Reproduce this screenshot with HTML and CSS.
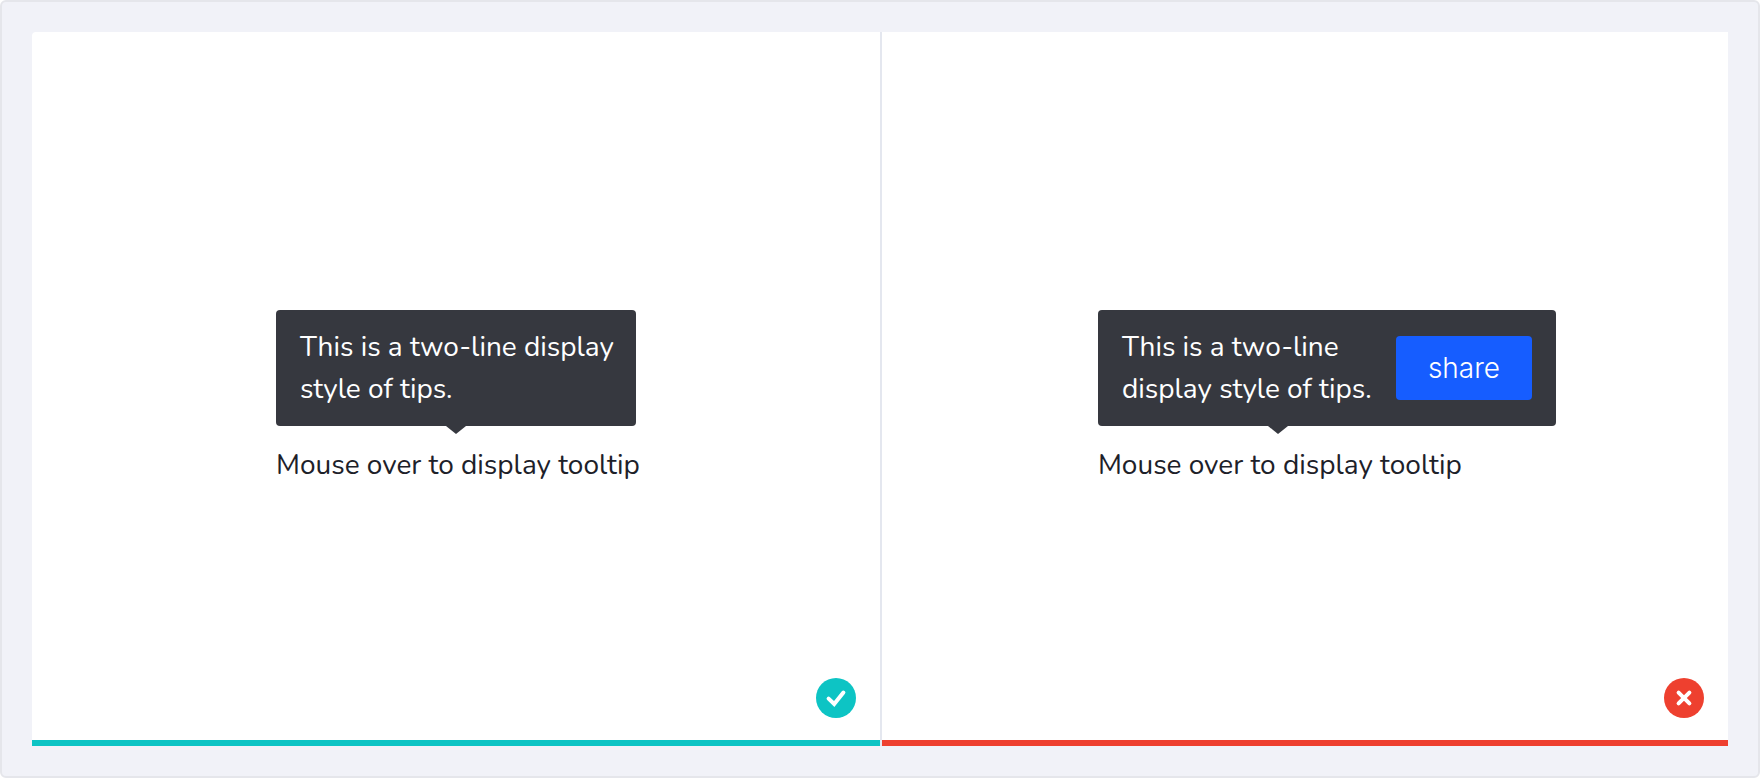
FILE: index.html
```
<!DOCTYPE html>
<html lang="en">

<head>
    <meta charset="UTF-8" />
    <meta name="viewport" content="width=device-width, initial-scale=1.0" />
    <title>Tooltip usage</title>
    <link rel="stylesheet" href="styles.css">
</head>

<body>
    <main class="board">
        <section class="panel panel-do">
            <div class="stage">
                <div class="demo">
                    <div class="tooltip" role="tooltip" id="tip-do">
                        <p class="tooltip-text">This is a two-line display<br>style of tips.</p>
                    </div>
                    <span class="trigger" aria-describedby="tip-do">Mouse over to display tooltip</span>
                </div>
            </div>
            <div class="status">
                <svg class="status-icon" viewBox="0 0 40 40" role="img" aria-label="Do">
                    <circle cx="20" cy="20" r="20" />
                    <path d="M12.6 20.6 18.2 26 27.4 14.6" />
                </svg>
            </div>
            <div class="bar"></div>
        </section>

        <section class="panel panel-dont">
            <div class="stage">
                <div class="demo">
                    <div class="tooltip" role="tooltip" id="tip-dont">
                        <p class="tooltip-text">This is a two-line<br>display style of tips.</p>
                        <button type="button" class="share-btn">share</button>
                    </div>
                    <span class="trigger" aria-describedby="tip-dont">Mouse over to display tooltip</span>
                </div>
            </div>
            <div class="status">
                <svg class="status-icon" viewBox="0 0 40 40" role="img" aria-label="Don't">
                    <circle cx="20" cy="20" r="20" />
                    <path d="M14.6 14.6 25.4 25.4M25.4 14.6 14.6 25.4" />
                </svg>
            </div>
            <div class="bar"></div>
        </section>
    </main>
</body>

</html>
```
FILE: styles.css
```
* {
    box-sizing: border-box;
}

body {
    margin: 0;
    font-family: "Nunito", "Lato", sans-serif;
    font-size: 28px;
    line-height: 42px;
    color: #1d2129;
    background-color: #ffffff;
}

.board {
    display: grid;
    grid-template-columns: 1fr 1fr;
    min-height: 100vh;
    padding: 30px;
    border: 2px solid #e5e6eb;
    border-radius: 6px;
    background-color: #f1f2f8;
}

.panel {
    display: flex;
    flex-direction: column;
    background-color: #ffffff;
}

.panel-do {
    border-top-left-radius: 4px;
}

.panel-dont {
    border-left: 2px solid #e4e7ef;
}

.stage {
    flex: 1;
    display: flex;
    align-items: center;
    justify-content: center;
    padding-top: 86px;
}

.panel-dont .stage {
    padding-left: 44px;
}

/* the tooltip and its trigger share the left edge */
.demo {
    display: flex;
    flex-direction: column;
    align-items: flex-start;
    gap: 18px;
    white-space: nowrap;
}

.panel-do .demo {
    width: 360px;
}

.tooltip {
    position: relative;
    display: flex;
    align-items: center;
    gap: 24px;
    padding: 16px 24px;
    border-radius: 4px;
    color: #ffffff;
    background-color: #36383f;
}

.panel-do .tooltip {
    width: 100%;
}

.tooltip::after {
    content: "";
    position: absolute;
    top: 100%;
    left: 170px;
    border: 10px solid transparent;
    border-top: 8px solid #36383f;
    border-bottom: 0;
}

.tooltip-text {
    margin: 0;
    min-width: 250px;
}

.share-btn {
    height: 64px;
    padding: 0 32px;
    border: none;
    border-radius: 4px;
    font-family: "Inter", sans-serif;
    font-size: 28px;
    font-weight: 300;
    color: #ffffff;
    background-color: #165dff;
    cursor: pointer;
}

.status {
    display: flex;
    justify-content: flex-end;
    padding: 0 24px 22px;
}

.status-icon {
    width: 40px;
    height: 40px;
}

.status-icon path {
    fill: none;
    stroke: #ffffff;
    stroke-width: 4;
    stroke-linecap: round;
}

.bar {
    height: 6px;
}

.panel-do .bar {
    background-color: #0dc4c4;
}

.panel-do circle {
    fill: #0dc4c4;
}

.panel-dont .bar {
    background-color: #ee402f;
}

.panel-dont circle {
    fill: #ee402f;
}
```
